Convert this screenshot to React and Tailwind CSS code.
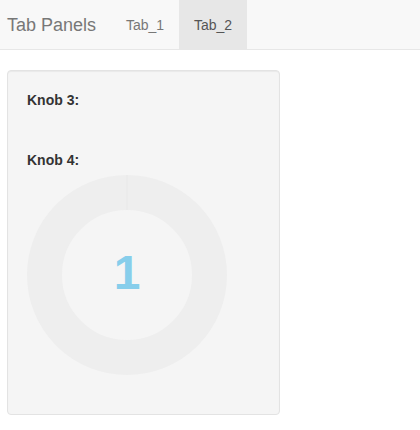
import React from "react";

const Knob = ({ value }) => {
  return (
    <div className="relative w-[200px] h-[200px]">
      <svg width="200" height="200" viewBox="0 0 200 200" className="absolute inset-0">
        <circle cx="100" cy="100" r="82.5" fill="none" stroke="#eeeeee" strokeWidth="35" />
        <line x1="100" y1="0" x2="100" y2="35" stroke="#e8e8e8" strokeWidth="1" />
      </svg>
      <div className="absolute inset-0 flex items-center justify-center">
        <span className="text-[48px] font-bold leading-none text-[#87ceeb] mt-[-5px]">{value}</span>
      </div>
    </div>
  );
};

export default function App() {
  return (
    <div className="w-[420px] h-[430px] bg-white font-['Liberation_Sans',Arial,sans-serif] text-[14px] text-[#333]">
      {/* navbar */}
      <div className="h-[50px] bg-[#f8f8f8] border-b border-[#e7e7e7] flex items-stretch">
        <div className="pl-[7px] w-[111px] flex items-center text-[18px] text-[#777] leading-[20px]">
          Tab Panels
        </div>
        <div className="w-[68px] flex items-center justify-center text-[#777] leading-[20px]">Tab_1</div>
        <div className="w-[68px] flex items-center justify-center bg-[#e7e7e7] text-[#555] leading-[20px]">
          Tab_2
        </div>
      </div>

      {/* well */}
      <div className="mt-[20px] ml-[7px] w-[273px] h-[345px] bg-[#f5f5f5] border border-[#e3e3e3] rounded-[4px] shadow-[inset_0_1px_1px_rgba(0,0,0,0.05)] px-[19px] pt-[19px]">
        <div className="font-bold leading-[20px]">Knob 3:</div>
        <div className="mt-[40px] font-bold leading-[20px]">Knob 4:</div>
        <div className="mt-[5px]">
          <Knob value="1" />
        </div>
      </div>
    </div>
  );
}
